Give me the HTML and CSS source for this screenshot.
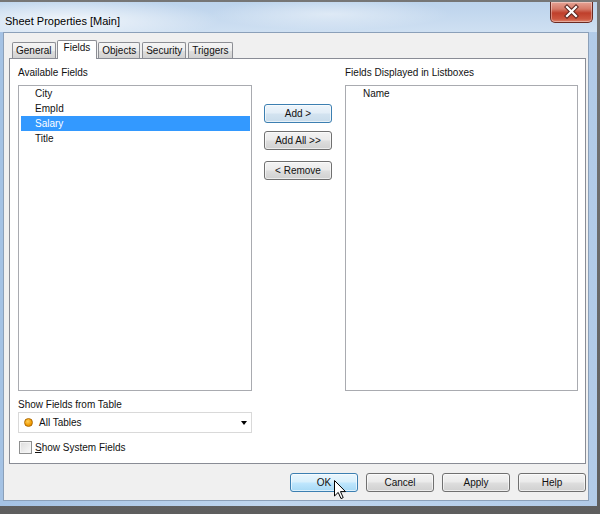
FILE: index.html
```html
<!DOCTYPE html>
<html lang="en">
<head>
    <meta charset="UTF-8">
    <title>Sheet Properties [Main]</title>
    <link rel="stylesheet" href="styles.css">
</head>
<body>
    <div class="window">
        <div class="titlebar">
            <span class="title">Sheet Properties [Main]</span>
            <button class="close" type="button" aria-label="Close">
                <svg width="43" height="21" viewBox="0 0 43 21">
                    <path d="M17 6 L26 15 M26 6 L17 15" stroke="#5a2620" stroke-width="4.2" stroke-linecap="square" fill="none"/>
                    <path d="M17 6 L26 15 M26 6 L17 15" stroke="#fff" stroke-width="2.2" stroke-linecap="square" fill="none"/>
                </svg>
            </button>
        </div>

        <div class="client">
            <div class="tabs">
                <span class="tab">General</span>
                <span class="tab active">Fields</span>
                <span class="tab">Objects</span>
                <span class="tab">Security</span>
                <span class="tab">Triggers</span>
            </div>

            <div class="panel">
                <div class="lists">
                    <div class="col">
                        <div class="label">Available Fields</div>
                        <ul class="listbox">
                            <li>City</li>
                            <li>EmpId</li>
                            <li class="selected">Salary</li>
                            <li>Title</li>
                        </ul>
                    </div>

                    <div class="movers">
                        <button class="btn focus" type="button">Add &gt;</button>
                        <button class="btn" type="button">Add All &gt;&gt;</button>
                        <button class="btn remove" type="button">&lt; Remove</button>
                    </div>

                    <div class="col right">
                        <div class="label">Fields Displayed in Listboxes</div>
                        <ul class="listbox">
                            <li class="shown">Name</li>
                        </ul>
                    </div>
                </div>

                <div class="below">
                    <div class="label tight">Show Fields from Table</div>
                    <div class="combo">
                        <span class="dot"></span>
                        <span>All Tables</span>
                        <span class="arrow"></span>
                    </div>
                    <label class="check">
                        <span class="box"></span>
                        <span><u>S</u>how System Fields</span>
                    </label>
                </div>
            </div>

            <div class="actions">
                <button class="btn hover" type="button">OK</button>
                <button class="btn" type="button">Cancel</button>
                <button class="btn" type="button">Apply</button>
                <button class="btn" type="button">Help</button>
            </div>
        </div>
    </div>

    <!-- mouse pointer resting on OK -->
    <svg class="pointer" width="13" height="20" viewBox="0 0 13 20">
        <path d="M0.5 0.5 L0.5 16 L4.2 12.4 L7 18.6 L9.2 17.6 L6.5 11.6 L11.5 11.6 Z" fill="#fff" stroke="#000" stroke-width="1" stroke-linejoin="round"/>
    </svg>
</body>
</html>
```

FILE: styles.css
```css
body {
    margin: 0;
    width: 600px;
    height: 514px;
    overflow: hidden;
    position: relative;
    background: linear-gradient(#767676, #5e5e5e);
    font-family: "Liberation Sans", Arial, sans-serif;
    font-size: 10px;
    color: #111;
}
.window {
    margin-top: 2px;
    width: 597px;
    height: 504px;
    box-sizing: border-box;
    padding-bottom: 5px;
    display: flex;
    flex-direction: column;
    background: linear-gradient(to right, #a4c2e4, #c0d6ee 45%, #b2cbe8);
}
.titlebar {
    height: 30px;
    flex: none;
    display: flex;
    align-items: flex-start;
    background:
        radial-gradient(ellipse 150px 22px at 70px 18px, rgba(255,255,255,0.75), rgba(255,255,255,0)),
        radial-gradient(ellipse 120px 16px at 330px 12px, rgba(255,255,255,0.45), rgba(255,255,255,0)),
        linear-gradient(#bcd3ec, #cfe0f2);
}
.title {
    padding: 13px 0 0 5px;
    font-size: 11px;
    line-height: 13px;
    color: #000;
}
.close {
    margin: 0 4px 0 auto;
    width: 43px;
    height: 21px;
    padding: 0;
    border: 1px solid #6b2a22;
    border-top: none;
    border-radius: 0 0 5px 5px;
    background: linear-gradient(#e6a395, #d57a68 35%, #bf3f2b 55%, #cc563f 85%, #de8770);
    box-shadow: inset 0 0 0 1px rgba(255,255,255,0.35);
}
.close svg {
    display: block;
    margin: -1px 0 0 -1px;
}
.client {
    flex: 1;
    margin: 0 8px 0 3px;
    border: 1px solid #8ba0b9;
    background: #f0f0f0;
    display: flex;
    flex-direction: column;
}
.tabs {
    display: flex;
    align-items: flex-end;
    height: 19px;
    padding: 7px 0 0 8px;
    margin-bottom: -1px;
    position: relative;
    z-index: 1;
}
.tab {
    height: 15px;
    line-height: 15px;
    margin: 0 2px 1px 0;
    padding: 0 3px;
    border: 1px solid #8c8e94;
    border-bottom: none;
    border-radius: 2px 2px 0 0;
    background: linear-gradient(#f5f5f5, #ececec 50%, #dedede 55%, #d2d2d2);
}
.tab.active {
    height: 18px;
    line-height: 14px;
    margin: 0 0 0 -1px;
    padding: 0 6px;
    background: #fff;
    position: relative;
    z-index: 2;
}
.tab.active + .tab {
    margin-left: 1px;
}
.panel {
    height: 406px;
    box-sizing: border-box;
    margin: 0 2px 0 5px;
    padding: 7px 7px 0 8px;
    border: 1px solid #898c95;
    background: #fff;
}
.lists {
    display: flex;
}
.col {
    width: 234px;
}
.col.right {
    width: 233px;
    margin-left: 13px;
}
.label {
    height: 13px;
    line-height: 13px;
    margin-bottom: 6px;
    white-space: nowrap;
}
.label.tight {
    margin-bottom: 1px;
}
.listbox {
    height: 306px;
    box-sizing: border-box;
    margin: 0;
    padding: 0 1px 0 2px;
    list-style: none;
    border: 1px solid #a9abb0;
    background: #fff;
}
.listbox li {
    height: 15px;
    line-height: 15px;
    padding-left: 14px;
}
.listbox li.selected {
    background: #3399ff;
    color: #fff;
}
.listbox li.shown {
    padding-left: 15px;
}
.movers {
    width: 68px;
    margin-left: 12px;
    padding-top: 38px;
    display: flex;
    flex-direction: column;
}
.movers .btn + .btn {
    margin-top: 8px;
}
.movers .btn.remove {
    margin-top: 11px;
}
.btn {
    width: 68px;
    height: 19px;
    box-sizing: border-box;
    padding: 0;
    border: 1px solid #707070;
    border-radius: 3px;
    background: linear-gradient(#f3f3f3, #ebebeb 45%, #dddddd 55%, #d0d0d0);
    box-shadow: inset 0 0 0 1px rgba(255,255,255,0.6);
    font-family: inherit;
    font-size: 10px;
    color: #111;
}
.btn.focus {
    border-color: #3c7fb1;
    background: linear-gradient(#eef5fb, #e3eef7 45%, #d3e3f0 55%, #c8dceb);
}
.btn.hover {
    border-color: #3c7fb1;
    background: linear-gradient(#eaf6fd, #d9f0fc 45%, #bee6fd 55%, #a7d9f5);
}
.below {
    width: 234px;
    margin-top: 7px;
}
.combo {
    height: 21px;
    box-sizing: border-box;
    display: flex;
    align-items: center;
    padding: 0 4px 0 5px;
    border: 1px solid #d9d9d9;
    background: #fff;
}
.dot {
    width: 9px;
    height: 9px;
    box-sizing: border-box;
    margin-right: 6px;
    border-radius: 50%;
    border: 1px solid #b06a00;
    background: radial-gradient(circle at 40% 35%, #ffcf5a, #f09a00 60%, #d07800);
}
.arrow {
    margin-left: auto;
    width: 0;
    height: 0;
    border-left: 3.5px solid transparent;
    border-right: 3.5px solid transparent;
    border-top: 4px solid #000;
}
.check {
    margin-top: 8px;
    height: 13px;
    display: flex;
    align-items: center;
}
.box {
    width: 13px;
    height: 13px;
    box-sizing: border-box;
    margin: 0 3px 0 1px;
    border: 1px solid #8e8f8f;
    background: linear-gradient(135deg, #dcdcdc, #f9f9f9);
    box-shadow: inset 0 0 0 1px #f4f4f4;
}
.check u {
    text-decoration-thickness: 1px;
}
.actions {
    display: flex;
    justify-content: flex-end;
    gap: 8px;
    margin: 9px 2px 0 0;
}
.pointer {
    position: absolute;
    left: 334px;
    top: 480px;
}
```
